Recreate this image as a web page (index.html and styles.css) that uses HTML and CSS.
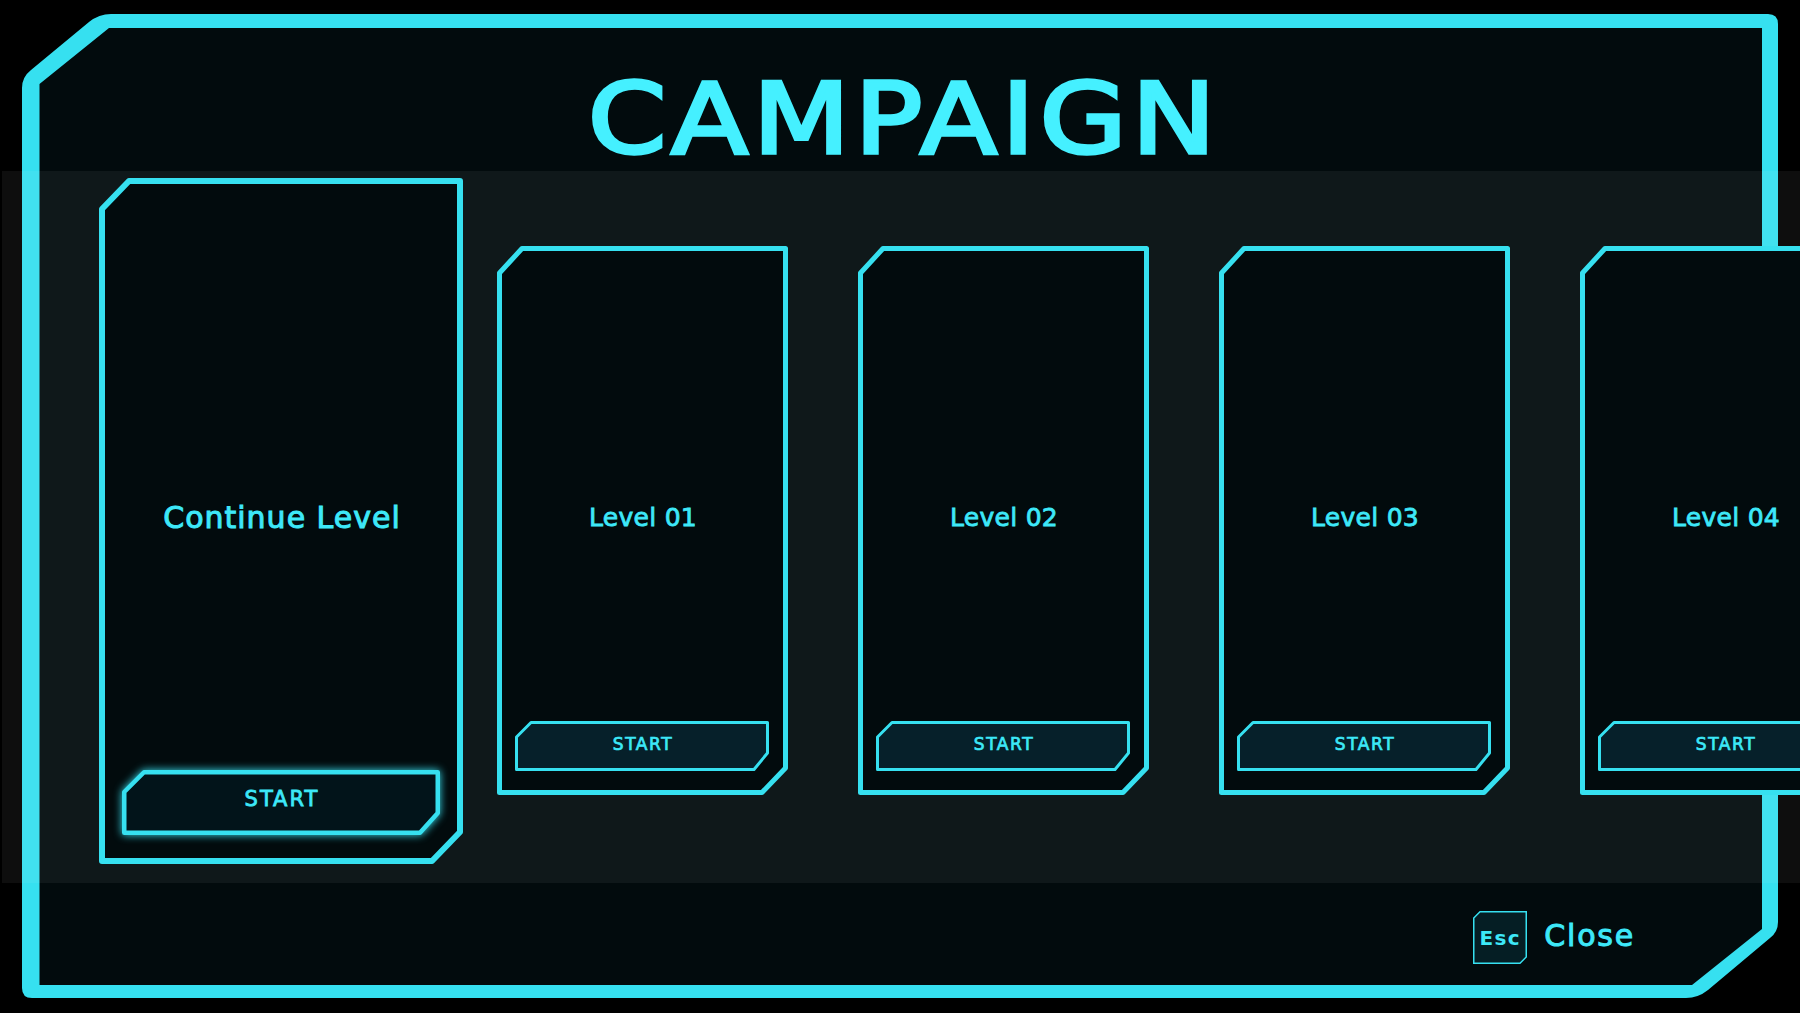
FILE: index.html
```html
<!DOCTYPE html>
<html lang="en">
<head>
    <meta charset="UTF-8">
    <title>Campaign</title>
    <link rel="stylesheet" href="styles.css">
</head>
<body>
    <div class="screen">
        <!-- Outer frame, thicker on the sides than top and bottom -->
        <svg class="frame" viewBox="0 0 1800 1013">
            <path class="frame-fill" d="M39 84 L109 28 L1762 28 L1762 929 L1692 985 L39 985 Z"/>
            <path class="frame-line" fill-rule="evenodd" d="M22 88 Q22 77 31 70 L89 22 Q99 14 111 14 L1768 14 Q1778 14 1778 24 L1778 922 Q1778 932 1770 938 L1708 990 Q1698 998 1686 998 L32 998 Q22 998 22 988 Z M39.5 84 L109 28 L1762 28 L1762 929 L1692 985 L39.5 985 Z"/>
        </svg>

        <header class="title-bar">
            <h1 class="title">CAMPAIGN</h1>
        </header>

        <div class="level-band">
            <div class="card card-active">
                <svg class="shape" viewBox="0 0 364 686"><polygon points="30,3 361,3 361,654 333,683 3,683 3,31"/></svg>
                <div class="card-label">Continue Level</div>
                <div class="start-btn">
                    <svg class="shape" viewBox="0 0 318 65"><polygon points="22,2.25 315.75,2.25 315.75,43 298,62.75 2.25,62.75 2.25,22"/></svg>
                    <span>START</span>
                </div>
            </div>
            <div class="card">
                <svg class="shape" viewBox="0 0 291 549"><polygon points="25,2.5 288.5,2.5 288.5,522 265,546.5 2.5,546.5 2.5,27"/></svg>
                <div class="card-label">Level 01</div>
                <div class="start-btn">
                    <svg class="shape" viewBox="0 0 254 50"><polygon points="16,1.5 252.5,1.5 252.5,32 239,48.5 1.5,48.5 1.5,16"/></svg>
                    <span>START</span>
                </div>
            </div>
            <div class="card">
                <svg class="shape" viewBox="0 0 291 549"><polygon points="25,2.5 288.5,2.5 288.5,522 265,546.5 2.5,546.5 2.5,27"/></svg>
                <div class="card-label">Level 02</div>
                <div class="start-btn">
                    <svg class="shape" viewBox="0 0 254 50"><polygon points="16,1.5 252.5,1.5 252.5,32 239,48.5 1.5,48.5 1.5,16"/></svg>
                    <span>START</span>
                </div>
            </div>
            <div class="card">
                <svg class="shape" viewBox="0 0 291 549"><polygon points="25,2.5 288.5,2.5 288.5,522 265,546.5 2.5,546.5 2.5,27"/></svg>
                <div class="card-label">Level 03</div>
                <div class="start-btn">
                    <svg class="shape" viewBox="0 0 254 50"><polygon points="16,1.5 252.5,1.5 252.5,32 239,48.5 1.5,48.5 1.5,16"/></svg>
                    <span>START</span>
                </div>
            </div>
            <div class="card">
                <svg class="shape" viewBox="0 0 291 549"><polygon points="25,2.5 288.5,2.5 288.5,522 265,546.5 2.5,546.5 2.5,27"/></svg>
                <div class="card-label">Level 04</div>
                <div class="start-btn">
                    <svg class="shape" viewBox="0 0 254 50"><polygon points="16,1.5 252.5,1.5 252.5,32 239,48.5 1.5,48.5 1.5,16"/></svg>
                    <span>START</span>
                </div>
            </div>
        </div>

        <footer class="hint-bar">
            <div class="key">
                <svg class="shape" viewBox="0 0 54 53"><polygon points="7,0.75 53.25,0.75 53.25,46 47,52.25 0.75,52.25 0.75,7"/></svg>
                <span>Esc</span>
            </div>
            <div class="hint-text">Close</div>
        </footer>
    </div>
</body>
</html>
```

FILE: styles.css
```css
body {
    margin: 0;
    background-color: #000;
    color: #3de8f8;
    font-family: "DejaVu Sans", sans-serif;
}
.screen {
    position: relative;
    width: 1800px;
    height: 1013px;
    overflow: hidden;
}
.frame {
    position: absolute;
    top: 0;
    left: 0;
    width: 1800px;
    height: 1013px;
}
.frame-fill {
    fill: #020b0d;
}
.frame-line {
    fill: #36e0f0;
}
.title-bar {
    position: relative;
    height: 171px;
    display: flex;
    justify-content: center;
    padding: 59px 0 0 9px;
    box-sizing: border-box;
}
.title {
    margin: 0;
    font-size: 98px;
    font-weight: normal;
    line-height: 120px;
    letter-spacing: 4px;
    color: #45f0ff;
    -webkit-text-stroke: 3.5px #45f0ff;
    transform: scaleX(1.15); /* wider letters, closer to the squared display face */
}
.level-band {
    position: relative;
    height: 712px;
    margin-left: 2px;
    padding: 0 0 13px 97px;
    box-sizing: border-box;
    background-color: rgba(255, 255, 255, 0.055);
    display: flex;
    align-items: center;
    gap: 70px;
    overflow: hidden;
}
/* svg outline sits behind the text of whatever holds it */
.shape {
    position: absolute;
    top: 0;
    left: 0;
    width: 100%;
    height: 100%;
    overflow: visible;
}
.card {
    position: relative;
    flex-shrink: 0;
    width: 291px;
    height: 549px;
    padding: 67px 19px 24px 18px;
    box-sizing: border-box;
    display: flex;
    flex-direction: column;
}
.card > .shape polygon {
    fill: #020b0d;
    stroke: #36e0f0;
    stroke-width: 5;
    stroke-linejoin: round;
}
.card-label {
    position: relative;
    flex: 1;
    display: flex;
    align-items: center;
    justify-content: center;
    padding-left: 2px;
    font-size: 25px;
    letter-spacing: 0.3px;
    -webkit-text-stroke: 0.8px #3de8f8;
}
.start-btn {
    position: relative;
    height: 50px;
    display: flex;
    align-items: center;
    justify-content: center;
    padding: 0 0 4px 2px;
    box-sizing: border-box;
    font-size: 17px;
    letter-spacing: 1.6px;
    -webkit-text-stroke: 0.7px #3de8f8;
}
.start-btn span {
    position: relative;
}
.start-btn .shape polygon {
    fill: #06202a;
    stroke: #36e0f0;
    stroke-width: 3;
    stroke-linejoin: round;
}
.card-active {
    width: 364px;
    height: 686px;
    margin-right: -36px;
    padding: 87px 23px 29px 23px;
}
.card-active > .shape polygon {
    stroke-width: 6;
}
.card-active .card-label {
    font-size: 30px;
    letter-spacing: 1px;
    -webkit-text-stroke: 1px #3de8f8;
}
.card-active .start-btn {
    height: 65px;
    padding-bottom: 6px;
    font-size: 21px;
    letter-spacing: 2px;
    -webkit-text-stroke: 0.8px #3de8f8;
}
.card-active .start-btn .shape {
    filter: drop-shadow(0 0 4px #36e0f0);
}
.card-active .start-btn .shape polygon {
    fill: #02141a;
    stroke-width: 4.5;
}
.hint-bar {
    position: relative;
    display: flex;
    justify-content: flex-end;
    align-items: flex-start;
    gap: 17px;
    padding: 28px 165px 0 0;
}
.key {
    position: relative;
    width: 54px;
    height: 53px;
    display: flex;
    align-items: center;
    justify-content: center;
    box-sizing: border-box;
    font-size: 20px;
    font-weight: bold;
    letter-spacing: 1.4px;
}
.key span {
    position: relative;
}
.key .shape polygon {
    fill: #051e24;
    stroke: #36e0f0;
    stroke-width: 1.5;
}
.hint-text {
    font-size: 30px;
    line-height: 50px;
    letter-spacing: 1.8px;
    -webkit-text-stroke: 1px #3de8f8;
}
```
